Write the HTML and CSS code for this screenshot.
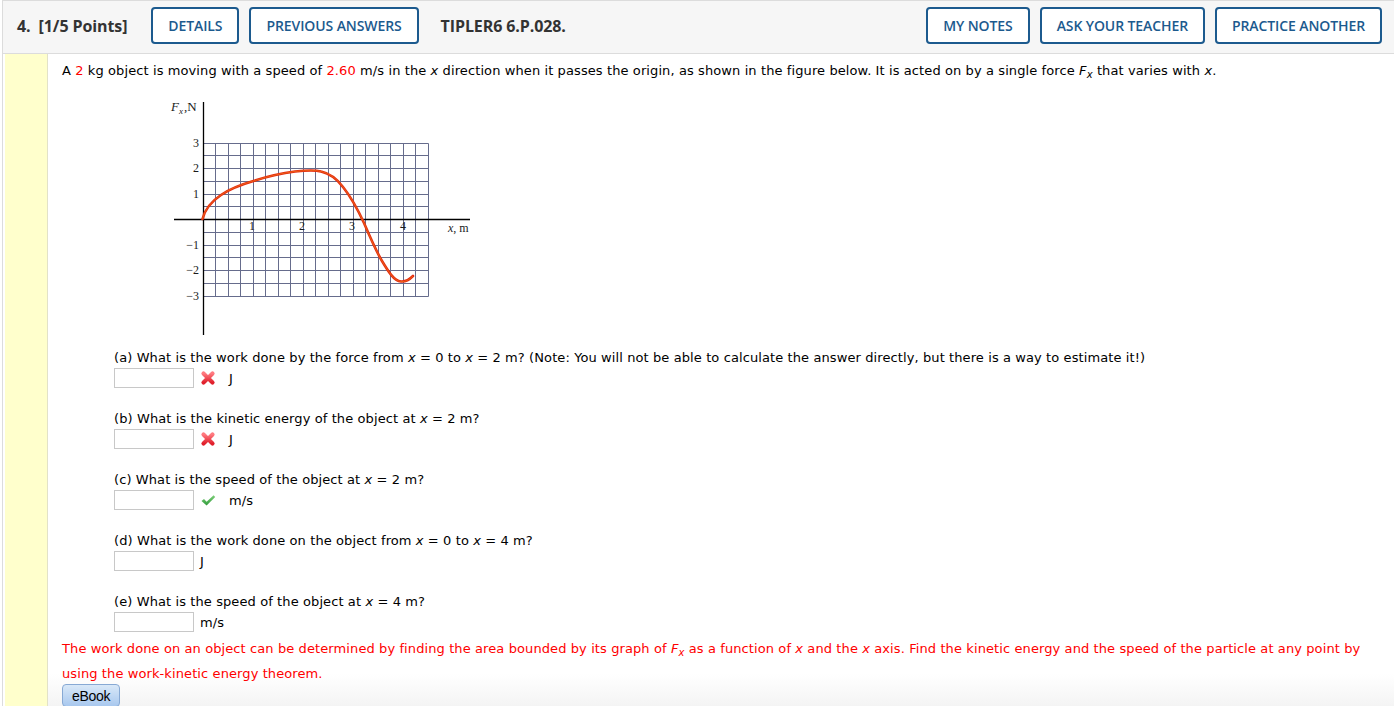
FILE: index.html
```html
<!DOCTYPE html>
<html>
<head>
<meta charset="utf-8">
<link rel="stylesheet" href="styles.css">
</head>
<body>
<div class="page">
  <div class="qhead">
    <div class="qnum">4.&nbsp; [1/5 Points]</div>
    <button class="btn">DETAILS</button>
    <button class="btn">PREVIOUS ANSWERS</button>
    <div class="qcode">TIPLER6 6.P.028.</div>
    <div class="spacer"></div>
    <button class="btn">MY NOTES</button>
    <button class="btn">ASK YOUR TEACHER</button>
    <button class="btn">PRACTICE ANOTHER</button>
  </div>
  <div class="qbody">
    <div class="gutter"></div>
    <div class="content">
      <p class="intro">A <span class="num">2</span> kg object is moving with a speed of <span class="num">2.60</span> m/s in the <i>x</i> direction when it passes the origin, as shown in the figure below. It is acted on by a single force <i>F</i><sub><i>x</i></sub> that varies with <i>x</i>.</p>

      <svg class="figure" width="315" height="242" viewBox="0 0 315 242">
        <path class="grid" d="M38.5,48.5V201.5 M50.5,48.5V201.5 M63.5,48.5V201.5 M75.5,48.5V201.5 M88.5,48.5V201.5 M100.5,48.5V201.5 M113.5,48.5V201.5 M125.5,48.5V201.5 M138.5,48.5V201.5 M150.5,48.5V201.5 M163.5,48.5V201.5 M175.5,48.5V201.5 M188.5,48.5V201.5 M200.5,48.5V201.5 M213.5,48.5V201.5 M225.5,48.5V201.5 M238.5,48.5V201.5 M250.5,48.5V201.5 M263.5,48.5V201.5 M38.5,48.5H263.5 M38.5,60.5H263.5 M38.5,73.5H263.5 M38.5,86.5H263.5 M38.5,99.5H263.5 M38.5,111.5H263.5 M38.5,137.5H263.5 M38.5,150.5H263.5 M38.5,162.5H263.5 M38.5,175.5H263.5 M38.5,188.5H263.5 M38.5,201.5H263.5"/>
        <path class="axis" d="M38.5,7V240 M9,124.5H305"/>
        <path class="curve" d="M37.5,124 C40,114 47,106 56,100 C66,93 78,89 90,85.5 C104,81 118,78 130,76.5 C140,75.5 150,75 156,76.5 C165,78.5 172,84 178,92 C186,102 193,115 199,128 C205,142 211,156 217,166 C223,176 229,186 236,186.5 C241,187 245,184 248,181"/>
        <path class="curve-hi" d="M37.5,124 C40,114 47,106 56,100 C66,93 78,89 90,85.5 C104,81 118,78 130,76.5 C140,75.5 150,75 156,76.5 C165,78.5 172,84 178,92 C186,102 193,115 199,128 C205,142 211,156 217,166 C223,176 229,186 236,186.5 C241,187 245,184 248,181"/>
        <text class="lbl big" x="6" y="16"><tspan font-style="italic">F</tspan><tspan font-style="italic" font-size="9" dy="3">x</tspan><tspan dx="1" dy="-3">,N</tspan></text>
        <text class="lbl" x="34" y="52" text-anchor="end">3</text>
        <text class="lbl" x="34" y="77" text-anchor="end">2</text>
        <text class="lbl" x="34" y="103" text-anchor="end">1</text>
        <text class="lbl" x="34" y="154" text-anchor="end">&#8722;1</text>
        <text class="lbl" x="34" y="179" text-anchor="end">&#8722;2</text>
        <text class="lbl" x="34" y="205" text-anchor="end">&#8722;3</text>
        <text class="lbl" x="87" y="135" text-anchor="middle">1</text>
        <text class="lbl" x="137" y="135" text-anchor="middle">2</text>
        <text class="lbl" x="187" y="135" text-anchor="middle">3</text>
        <text class="lbl" x="238" y="135" text-anchor="middle">4</text>
        <text class="lbl" x="283" y="137"><tspan font-style="italic">x</tspan>, m</text>
      </svg>

      <div class="parts">
        <div class="part">
          <div class="ptext">(a) What is the work done by the force from <i>x</i> = 0 to <i>x</i> = 2 m? (Note: You will not be able to calculate the answer directly, but there is a way to estimate it!)</div>
          <div class="answer">
            <span class="box"></span>
            <svg class="icon" width="16" height="16" viewBox="0 0 16 16"><defs><linearGradient id="xg" x1="0" y1="0" x2="0" y2="1"><stop offset="0" stop-color="#ff7a80"/><stop offset="1" stop-color="#e0202c"/></linearGradient></defs><path d="M3.5,3.5L12.5,12.5M12.5,3.5L3.5,12.5" stroke="url(#xg)" stroke-width="4.2" stroke-linecap="round" fill="none"/></svg>
            <span class="unit">J</span>
          </div>
        </div>
        <div class="part">
          <div class="ptext">(b) What is the kinetic energy of the object at <i>x</i> = 2 m?</div>
          <div class="answer">
            <span class="box"></span>
            <svg class="icon" width="16" height="16" viewBox="0 0 16 16"><path d="M3.5,3.5L12.5,12.5M12.5,3.5L3.5,12.5" stroke="url(#xg)" stroke-width="4.2" stroke-linecap="round" fill="none"/></svg>
            <span class="unit">J</span>
          </div>
        </div>
        <div class="part">
          <div class="ptext">(c) What is the speed of the object at <i>x</i> = 2 m?</div>
          <div class="answer">
            <span class="box"></span>
            <svg class="icon" width="16" height="16" viewBox="0 0 16 16"><defs><linearGradient id="cg" x1="0" y1="0" x2="0" y2="1"><stop offset="0" stop-color="#7fd07a"/><stop offset="1" stop-color="#2f9a3a"/></linearGradient></defs><path d="M1.5,9 L4,7 L6.6,9.8 L13.6,3.2 L15.2,5 L6.6,13.6 Z" fill="url(#cg)"/></svg>
            <span class="unit">m/s</span>
          </div>
        </div>
        <div class="part">
          <div class="ptext">(d) What is the work done on the object from <i>x</i> = 0 to <i>x</i> = 4 m?</div>
          <div class="answer">
            <span class="box"></span>
            <span class="unit plain">J</span>
          </div>
        </div>
        <div class="part">
          <div class="ptext">(e) What is the speed of the object at <i>x</i> = 4 m?</div>
          <div class="answer">
            <span class="box"></span>
            <span class="unit plain">m/s</span>
          </div>
        </div>
      </div>

      <p class="hint">The work done on an object can be determined by finding the area bounded by its graph of <i>F</i><sub><i>x</i></sub> as a function of <i>x</i> and the <i>x</i> axis. Find the kinetic energy and the speed of the particle at any point by using the work-kinetic energy theorem.</p>
      <button class="ebook">eBook</button>
    </div>
  </div>
</div>
</body>
</html>
```
FILE: styles.css
```css
html, body {
  margin: 0;
  padding: 0;
  background: #fff;
  overflow: hidden;
}

.page {
  margin-left: 2px;
  border-left: 1px solid #dcdcdc;
  height: 706px;
}

.qhead {
  display: flex;
  align-items: center;
  height: 37px;
  padding: 6px 12px 9px 14px;
  background: #f6f6f6;
  border-top: 1px solid #dcdcdc;
  border-bottom: 1px solid #dcdcdc;
  font-family: "Open Sans", "Liberation Sans", sans-serif;
  color: #333;
}

.qnum {
  font-weight: 700;
  font-size: 16px;
  letter-spacing: -0.1px;
  margin-right: 24px;
  white-space: pre;
}

.qcode {
  font-weight: 700;
  font-size: 16px;
  letter-spacing: -0.1px;
  margin-left: 12px;
}

.spacer {
  flex: 1;
}

.btn {
  height: 37px;
  box-sizing: border-box;
  padding: 0 15px;
  margin-right: 10px;
  background: #fff;
  border: 2px solid #1c5a8e;
  border-radius: 4px;
  color: #1c5a8e;
  font-family: "Open Sans", "Liberation Sans", sans-serif;
  font-weight: 600;
  font-size: 14px;
  letter-spacing: -0.1px;
}

.btn:last-child {
  margin-right: 0;
}

.qbody {
  display: flex;
  height: 652px;
}

.gutter {
  width: 42px;
  margin-left: 2px;
  background: #ffffcc;
  border-right: 1px solid #e2e2c8;
}

.content {
  flex: 1;
  padding: 8px 20px 0 14px;
  font-family: "DejaVu Sans", Verdana, sans-serif;
  font-size: 13px;
  letter-spacing: 0.1px;
  color: #000;
  background: linear-gradient(to bottom, #fff 0, #fff 620px, #f4f4f4 652px);
}

.intro {
  margin: 0;
  line-height: 18px;
  white-space: nowrap;
}

.num {
  color: #f00;
}

sub {
  font-size: 10px;
  line-height: 0;
  vertical-align: -3px;
}

.figure {
  display: block;
  margin: 15px 0 0 103px;
}

.grid {
  stroke: #666c8c;
  stroke-width: 1;
  fill: none;
}

.axis {
  stroke: #000;
  stroke-width: 1.3;
  fill: none;
}

.curve {
  stroke: #e42a10;
  stroke-width: 2.6;
  fill: none;
  stroke-linecap: round;
}

.curve-hi {
  stroke: #f29a1c;
  stroke-width: 0.7;
  fill: none;
  opacity: 0.7;
}

.lbl {
  font-family: "Liberation Serif", serif;
  font-size: 12px;
  fill: #1a1a1a;
  letter-spacing: 0;
}

.lbl.big {
  font-size: 13px;
}

.parts {
  margin: 12px 0 0 52px;
}

.part {
  margin-bottom: 22px;
}

.part:last-child {
  margin-bottom: 0;
}

.ptext {
  line-height: 18px;
  white-space: nowrap;
}

.answer {
  display: flex;
  align-items: center;
  margin-top: 1px;
  height: 20px;
}

.box {
  width: 78px;
  height: 18px;
  border: 1px solid #c8c8c8;
  background: #fff;
}

.icon {
  margin-left: 6px;
}

.unit {
  margin-left: 13px;
}

.unit.plain {
  margin-left: 6px;
}

.hint {
  margin: 4px 0 0 0;
  line-height: 25px;
  color: #f00;
}

.ebook {
  display: block;
  height: 23px;
  padding: 0 9px;
  margin-top: -2px;
  background: linear-gradient(to bottom, #d9e8f8, #a8c8ee);
  border: 1px solid #87a9d4;
  border-radius: 4px;
  font-family: "Liberation Sans Narrow", "Liberation Sans", sans-serif;
  font-size: 14px;
  letter-spacing: -0.3px;
  color: #000;
}
```
